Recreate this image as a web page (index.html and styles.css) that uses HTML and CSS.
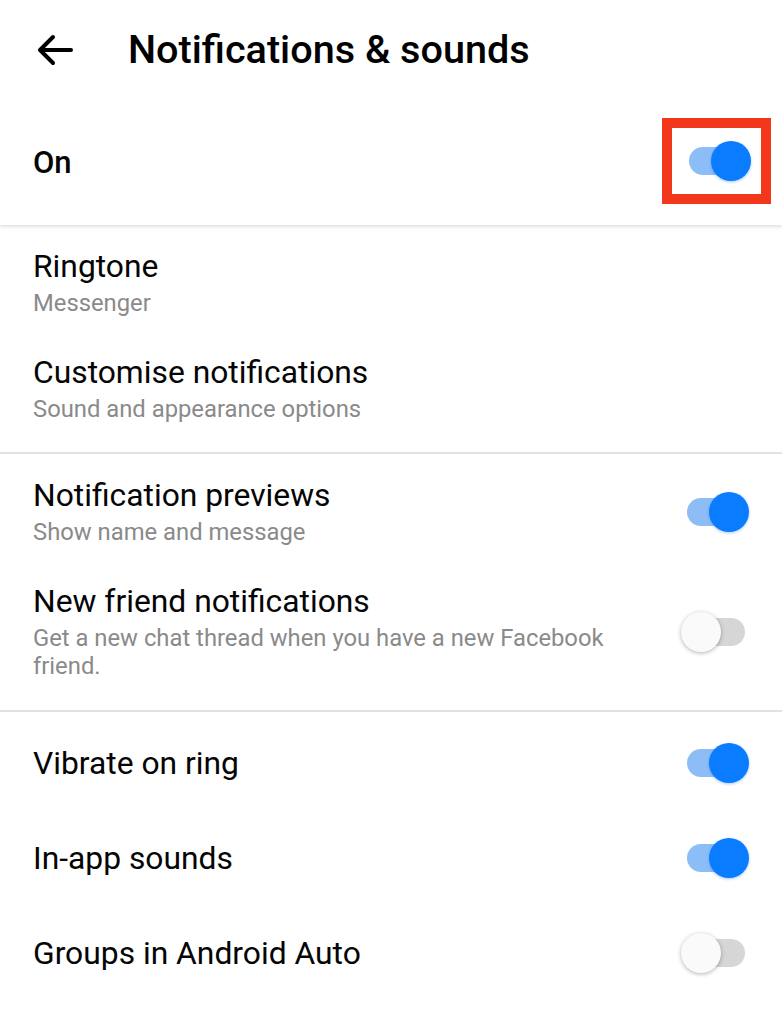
FILE: index.html
```html
<!DOCTYPE html>
<html lang="en">
<head>
<meta charset="utf-8">
<title>Notifications &amp; sounds</title>
<link rel="stylesheet" href="styles.css">
</head>
<body>
<div class="screen">
  <header class="appbar">
    <svg class="back" width="36" height="32" viewBox="0 0 36 32" aria-hidden="true">
      <path d="M34 16 H4 M16 3 L3 16 L16 29" fill="none" stroke="#000" stroke-width="4" stroke-linecap="round" stroke-linejoin="round"/>
    </svg>
    <h1 class="title">Notifications &amp; sounds</h1>
  </header>

  <div class="master">
    <span class="master-label">On</span>
    <div class="highlight">
      <div class="switch on"><span class="track"></span><span class="knob"></span></div>
    </div>
  </div>

  <section class="section s1">
    <div class="item">
      <div class="text">
        <div class="item-title">Ringtone</div>
        <div class="item-sub">Messenger</div>
      </div>
    </div>
    <div class="item">
      <div class="text">
        <div class="item-title">Customise notifications</div>
        <div class="item-sub">Sound and appearance options</div>
      </div>
    </div>
  </section>

  <section class="section s2">
    <div class="item">
      <div class="text">
        <div class="item-title">Notification previews</div>
        <div class="item-sub">Show name and message</div>
      </div>
      <div class="switch on"><span class="track"></span><span class="knob"></span></div>
    </div>
    <div class="item">
      <div class="text">
        <div class="item-title">New friend notifications</div>
        <div class="item-sub">Get a new chat thread when you have a new Facebook friend.</div>
      </div>
      <div class="switch off"><span class="track"></span><span class="knob"></span></div>
    </div>
  </section>

  <section class="section s3">
    <div class="row">
      <div class="item-title">Vibrate on ring</div>
      <div class="switch on"><span class="track"></span><span class="knob"></span></div>
    </div>
    <div class="row">
      <div class="item-title">In-app sounds</div>
      <div class="switch on"><span class="track"></span><span class="knob"></span></div>
    </div>
    <div class="row">
      <div class="item-title">Groups in Android Auto</div>
      <div class="switch off"><span class="track"></span><span class="knob"></span></div>
    </div>
  </section>
</div>
</body>
</html>
```

FILE: styles.css
```css
html, body {
  margin: 0;
  padding: 0;
  background: #ffffff;
}

body {
  font-family: Roboto, "Noto Sans", "Liberation Sans", sans-serif;
  color: #050505;
}

.screen {
  width: 782px;
  min-height: 1024px;
  background: #ffffff;
}

.appbar {
  height: 100px;
  display: flex;
  align-items: center;
  padding-left: 37px;
}

.back {
  display: block;
  flex: none;
}

.title {
  margin: 0 0 0 55px;
  font-size: 39.6px;
  font-weight: 500;
  line-height: 44px;
  color: #000;
}

.master {
  height: 125px;
  display: flex;
  align-items: center;
  justify-content: space-between;
  padding: 0 11px 0 33px;
  box-shadow: 0 2px 3px rgba(0, 0, 0, 0.12);
  position: relative;
}

.master-label {
  font-size: 31px;
  font-weight: 500;
  line-height: 36px;
}

.highlight {
  width: 89px;
  height: 66px;
  margin-top: -3px;
  border: 10px solid #f2371b;
  display: flex;
  align-items: center;
  justify-content: center;
}

.section {
  border-bottom: 2px solid #e2e2e2;
}

.s1 {
  padding-top: 2px;
  padding-bottom: 13px;
}

.s2 {
  padding-top: 2px;
  padding-bottom: 14px;
}

.s3 {
  border-bottom: none;
  padding-top: 3px;
}

.item {
  display: flex;
  align-items: center;
  justify-content: space-between;
  padding: 21px 33px 16px 33px;
}

.text {
  flex: 1;
  min-width: 0;
  padding-right: 40px;
}

.item-title {
  font-size: 31.8px;
  line-height: 36px;
  font-weight: 400;
  color: #050505;
}

.item-sub {
  margin-top: 5px;
  font-size: 23.8px;
  line-height: 28px;
  color: #8a8a8a;
}

.row {
  height: 95px;
  display: flex;
  align-items: center;
  justify-content: space-between;
  padding: 0 33px;
}

.switch {
  position: relative;
  width: 68px;
  height: 40px;
  flex: none;
}

.track {
  position: absolute;
  left: 6px;
  right: 4px;
  top: 6px;
  height: 28px;
  border-radius: 14px;
}

.knob {
  position: absolute;
  top: 0;
  width: 40px;
  height: 40px;
  border-radius: 50%;
}

.switch.on .track {
  background: #8dbdf6;
}

.switch.on .knob {
  right: 0;
  background: #0a7cff;
  box-shadow: 0 1px 3px rgba(10, 100, 220, 0.35);
}

.switch.off .track {
  background: #d6d6d6;
}

.switch.off .knob {
  left: 0;
  background: #fafafa;
  box-shadow: 0 1px 4px rgba(0, 0, 0, 0.3);
}
```
